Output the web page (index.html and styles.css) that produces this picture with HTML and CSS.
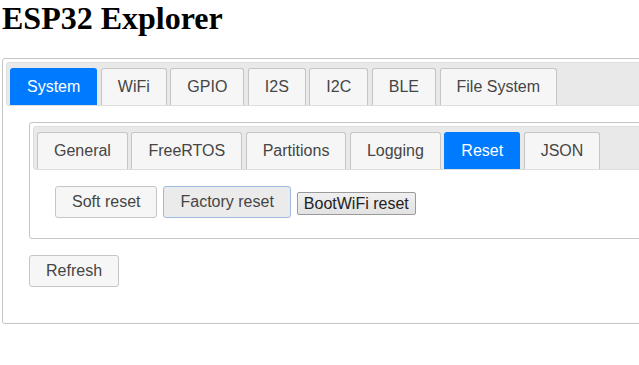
FILE: index.html
```html
<!DOCTYPE html>
<html>
<head>
<meta charset="utf-8">
<title>ESP32 Explorer</title>
<link rel="stylesheet" href="styles.css">
</head>
<body>
<h1 class="title">ESP32 Explorer</h1>
<div class="tabs outer">
  <ul class="tabnav">
    <li class="tab active">System</li>
    <li class="tab">WiFi</li>
    <li class="tab">GPIO</li>
    <li class="tab">I2S</li>
    <li class="tab">I2C</li>
    <li class="tab">BLE</li>
    <li class="tab">File System</li>
  </ul>
  <div class="tabpanel">
    <div class="tabs inner">
      <ul class="tabnav">
        <li class="tab">General</li>
        <li class="tab">FreeRTOS</li>
        <li class="tab">Partitions</li>
        <li class="tab">Logging</li>
        <li class="tab active">Reset</li>
        <li class="tab">JSON</li>
      </ul>
      <div class="tabpanel inner-panel">
        <div class="btnrow">
          <button class="btn">Soft reset</button>
          <button class="btn focus">Factory reset</button>
          <button class="native">BootWiFi reset</button>
        </div>
      </div>
    </div>
    <div class="actions">
      <button class="btn">Refresh</button>
    </div>
  </div>
</div>
</body>
</html>
```

FILE: styles.css
```css
html, body {
  margin: 0;
  padding: 0;
  background: #ffffff;
  overflow: hidden;
}
body {
  padding-left: 2px;
  font-family: "Liberation Sans", Arial, sans-serif;
  font-size: 16px;
}
.title {
  font-family: "Liberation Serif", "Times New Roman", serif;
  font-size: 32px;
  font-weight: bold;
  line-height: 37px;
  margin: 0 0 21px 0;
  color: #000;
}
.tabs {
  border: 1px solid #c5c5c5;
  border-radius: 3px;
  padding: 3px;
  background: #fff;
}
.outer {
  width: 720px;
}
.tabnav {
  list-style: none;
  margin: 0;
  display: flex;
  gap: 3.5px;
  padding: 5px 3px 0 3px;
  background: #e9e9e9;
  border: 1px solid #dddddd;
  border-radius: 3px;
}
.tab {
  padding: 8px 16px;
  line-height: 20px;
  border: 1px solid #c5c5c5;
  border-bottom: 0;
  border-radius: 3px 3px 0 0;
  background: #f6f6f6;
  color: #454545;
  white-space: nowrap;
}
.tab.active {
  background: #007bff;
  border-color: #007bff;
  color: #ffffff;
}
.tabpanel {
  padding: 16px 22px 16px 23px;
}
.inner-panel {
  padding: 16px 22px 17px 22px;
}
.btnrow {
  display: flex;
  align-items: center;
  gap: 6px;
}
.btn {
  font-family: "Liberation Sans", Arial, sans-serif;
  font-size: 16px;
  line-height: 18px;
  padding: 6px 16px;
  border: 1px solid #c5c5c5;
  border-radius: 3px;
  background: #f6f6f6;
  color: #454545;
  margin: 0;
}
.btn.focus {
  background: #ebebeb;
  border-color: #9db9e0;
}
.native {
  font-family: "Liberation Sans", Arial, sans-serif;
  font-size: 16px;
  line-height: 19px;
  padding: 1px 6px;
  margin: 3px 0 0 0;
  border: 1px solid #9a9a9a;
  border-radius: 2px;
  background: linear-gradient(#f0f0f0, #e2e2e2);
  color: #222;
}
.actions {
  margin-top: 16px;
  margin-bottom: 17px;
}
```
